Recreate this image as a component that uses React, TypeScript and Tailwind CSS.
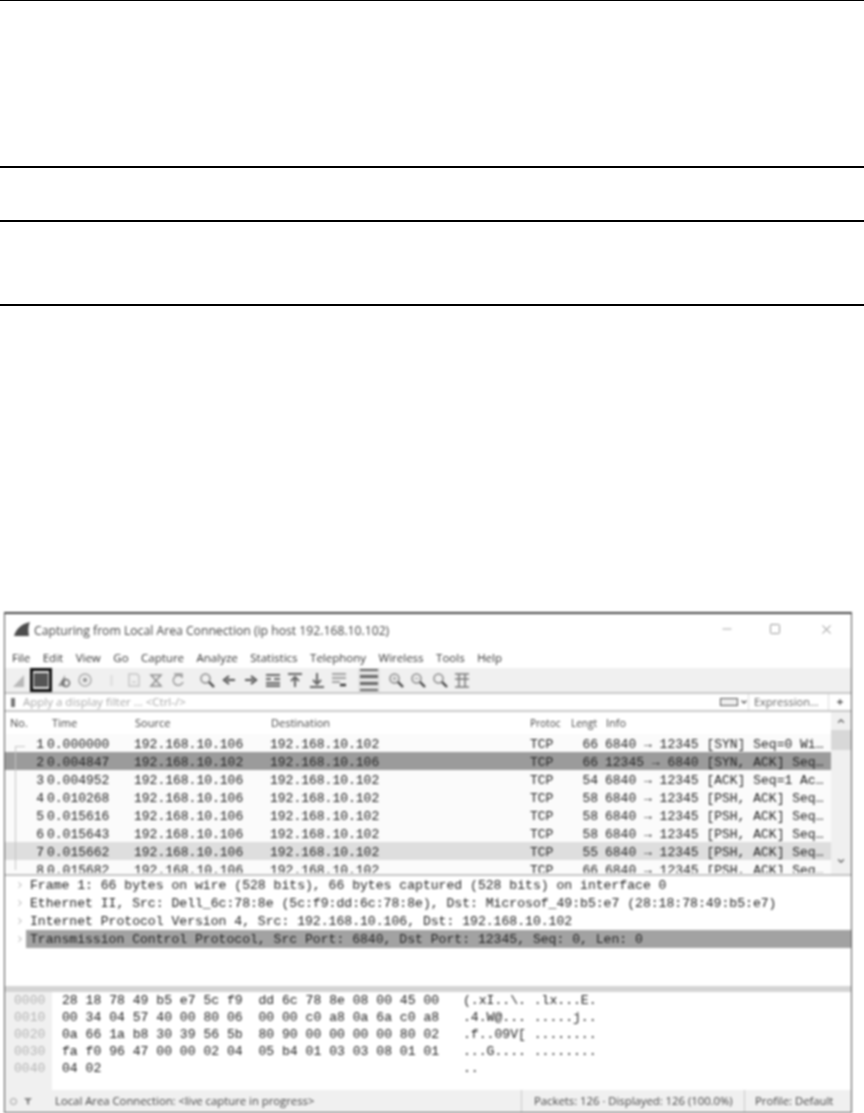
import { ChevronDown, ChevronRight, ChevronUp, Minus, Plus, Square, X } from 'lucide-react';
import type { ReactNode } from 'react';

const mono = "font-['Liberation_Mono',monospace]";
const ui = "font-['Open_Sans',sans-serif]";

const packets = [
  ['1', '0.000000', '192.168.10.106', '192.168.10.102', '66', '6840 → 12345 [SYN] Seq=0 Wi…'],
  ['2', '0.004847', '192.168.10.102', '192.168.10.106', '66', '12345 → 6840 [SYN, ACK] Seq…'],
  ['3', '0.004952', '192.168.10.106', '192.168.10.102', '54', '6840 → 12345 [ACK] Seq=1 Ac…'],
  ['4', '0.010268', '192.168.10.106', '192.168.10.102', '58', '6840 → 12345 [PSH, ACK] Seq…'],
  ['5', '0.015616', '192.168.10.106', '192.168.10.102', '58', '6840 → 12345 [PSH, ACK] Seq…'],
  ['6', '0.015643', '192.168.10.106', '192.168.10.102', '58', '6840 → 12345 [PSH, ACK] Seq…'],
  ['7', '0.015662', '192.168.10.106', '192.168.10.102', '55', '6840 → 12345 [PSH, ACK] Seq…'],
  ['8', '0.015682', '192.168.10.106', '192.168.10.102', '66', '6840 → 12345 [PSH, ACK] Seq…'],
];

const details = [
  'Frame 1: 66 bytes on wire (528 bits), 66 bytes captured (528 bits) on interface 0',
  'Ethernet II, Src: Dell_6c:78:8e (5c:f9:dd:6c:78:8e), Dst: Microsof_49:b5:e7 (28:18:78:49:b5:e7)',
  'Internet Protocol Version 4, Src: 192.168.10.106, Dst: 192.168.10.102',
  'Transmission Control Protocol, Src Port: 6840, Dst Port: 12345, Seq: 0, Len: 0',
];

const hexRows = [
  ['0000', '28 18 78 49 b5 e7 5c f9  dd 6c 78 8e 08 00 45 00', '(.xI..\\. .lx...E.'],
  ['0010', '00 34 04 57 40 00 80 06  00 00 c0 a8 0a 6a c0 a8', '.4.W@... .....j..'],
  ['0020', '0a 66 1a b8 30 39 56 5b  80 90 00 00 00 00 80 02', '.f..09V[ ........'],
  ['0030', 'fa f0 96 47 00 00 02 04  05 b4 01 03 03 08 01 01', '...G.... ........'],
  ['0040', '04 02', '..'],
];

const menus = ['File', 'Edit', 'View', 'Go', 'Capture', 'Analyze', 'Statistics', 'Telephony', 'Wireless', 'Tools', 'Help'];

function Icon({ children, className = '' }: { children: ReactNode; className?: string }) {
  return (
    <div className={`flex h-[20px] w-[22px] shrink-0 items-center justify-center ${className}`}>
      <svg width="18" height="18" viewBox="0 0 18 18" fill="none" stroke="#6b6b6b" strokeWidth="1.5">
        {children}
      </svg>
    </div>
  );
}

function Lens({ inner }: { inner?: ReactNode }) {
  return (
    <>
      <circle cx="7.5" cy="7.5" r="4.5" stroke="#8a8a8a" />
      <path d="M11 11l5 5" stroke="#444" strokeWidth="2.4" />
      {inner}
    </>
  );
}

function Toolbar() {
  return (
    <div className="flex h-[24px] items-center bg-[#f0f0f0] pl-[3px]">
      <Icon>
        <path d="M3 16L14 4v12z" fill="#b8b8b8" stroke="none" />
      </Icon>
      <div className="flex h-[24px] w-[22px] shrink-0 items-center justify-center border-[3px] border-[#111]">
        <div className="h-[14px] w-[14px] bg-[#555]" />
      </div>
      <Icon>
        <path d="M4 15L11 4v11z" fill="#999" stroke="none" />
        <circle cx="12" cy="12" r="3.5" stroke="#666" />
      </Icon>
      <Icon>
        <circle cx="9" cy="9" r="6" stroke="#aaa" />
        <circle cx="9" cy="9" r="2.2" fill="#999" stroke="none" />
      </Icon>
      <div className="w-[5px] shrink-0" />
      <Icon>
        <path d="M7 4h3v11H7z" fill="#e2e2e2" stroke="none" />
      </Icon>
      <Icon>
        <path d="M4 3h8l2 2v10H4z" stroke="#c4c4c4" />
        <path d="M7 11h4" stroke="#ccc" />
      </Icon>
      <Icon>
        <path d="M4 4h10L4 15h10z" stroke="#8d8d8d" />
      </Icon>
      <Icon>
        <path d="M13 6a5 5 0 1 0 1 5M5 3h8v4" stroke="#9a9a9a" />
      </Icon>
      <div className="w-[7px] shrink-0" />
      <Icon>
        <Lens />
      </Icon>
      <Icon>
        <path d="M15 9H7M9 5L4 9l5 4" stroke="#555" strokeWidth="2.2" />
      </Icon>
      <Icon>
        <path d="M3 9h8M9 5l5 4-5 4" stroke="#555" strokeWidth="2.2" />
      </Icon>
      <Icon>
        <path d="M2 4h14M2 8h5M10 8h6M2 12h14M2 15h14" stroke="#666" strokeWidth="1.8" />
      </Icon>
      <Icon>
        <path d="M2 3h14M9 16V7M5 10l4-4 4 4" stroke="#666" strokeWidth="2" />
      </Icon>
      <Icon>
        <path d="M2 16h14M9 2v10M5 9l4 4 4-4" stroke="#666" strokeWidth="2" />
      </Icon>
      <Icon>
        <path d="M2 3h14M2 7h14M2 11h8" stroke="#888" />
        <path d="M10 14h6" stroke="#333" strokeWidth="2.4" />
      </Icon>
      <div className="w-[8px] shrink-0" />
      <div className="flex h-[24px] w-[22px] shrink-0 flex-col justify-center gap-[4px] bg-[#e3e3e3] px-[2px]">
        <div className="h-[2px] bg-[#666]" />
        <div className="h-[3px] bg-[#666]" />
        <div className="h-[3px] bg-[#666]" />
        <div className="h-[2px] bg-[#666]" />
      </div>
      <div className="w-[5px] shrink-0" />
      <Icon>
        <Lens inner={<path d="M5.5 7.5h4M7.5 5.5v4" stroke="#999" strokeWidth="1" />} />
      </Icon>
      <Icon>
        <Lens inner={<path d="M5.5 7.5h4" stroke="#999" strokeWidth="1" />} />
      </Icon>
      <Icon>
        <Lens />
      </Icon>
      <Icon>
        <path d="M2 3h14M2 16h14M6 3v13M12 3v13M2 8h14" stroke="#777" />
      </Icon>
    </div>
  );
}

function FilterRow() {
  return (
    <div className={`flex h-[20px] items-center border-y-2 border-[#c8c8c8] bg-white pl-[4px] text-[11.5px] ${ui}`}>
      <div className="mx-[2px] h-[9px] w-[4px] bg-[#777]" />
      <span className="ml-[6px] text-[#a8a8a8]">Apply a display filter … &lt;Ctrl-/&gt;</span>
      <div className="ml-auto flex items-center">
        <div className="h-[8px] w-[18px] border border-[#555] bg-[#eee]" />
        <ChevronDown size={8} strokeWidth={4} className="ml-[2px] text-[#555]" />
        <div className="h-[16px] border-l border-[#ddd]" />
        <span className="ml-[5px] w-[74px] text-[11px] text-[#666]">Expression…</span>
        <div className="h-[16px] border-l border-[#ddd]" />
        <div className="flex w-[22px] justify-center">
          <Plus size={8} strokeWidth={4} className="text-[#555]" />
        </div>
      </div>
    </div>
  );
}

function PacketList() {
  return (
    <div className="flex h-[164px] border-b-2 border-[#c4c4c4]">
      <div className="min-w-0 flex-1 overflow-hidden">
        <div className={`flex h-[22px] items-center bg-white text-[11px] text-[#444] ${ui}`}>
          <span className="w-[47px] pl-[5px]">No.</span>
          <span className="w-[83px]">Time</span>
          <span className="w-[136px]">Source</span>
          <span className="w-[259px]">Destination</span>
          <span className="w-[41px] text-[10px]">Protoc</span>
          <span className="w-[35px] text-[10px]">Lengt</span>
          <span>Info</span>
        </div>
        <div className={`relative h-[139px] overflow-hidden text-[13px] leading-[18px] text-[#222] ${mono}`}>
          {packets.map((p, i) => (
            <div
              key={p[0]}
              className={`flex h-[18px] pt-[2px] whitespace-pre ${
                i === 1 ? 'bg-[#9b9b9b]' : i === 6 ? 'bg-[#dedede]' : 'bg-[#fbfbfb]'
              }`}
            >
              <span className="w-[39px] text-right">{p[0]}</span>
              <span className="ml-[3px] w-[87px]">{p[1]}</span>
              <span className="w-[136px]">{p[2]}</span>
              <span className="w-[260px]">{p[3]}</span>
              <span className="w-[41px]">TCP</span>
              <span className="w-[27px] text-right">{p[4]}</span>
              <span className="ml-[7px]">{p[5]}</span>
            </div>
          ))}
          <div className="absolute top-[12px] left-[10px] h-[124px] w-[10px] border-t border-l border-[#c4c4c4]" />
        </div>
      </div>
      <div className="flex w-[20px] shrink-0 flex-col items-center bg-[#f0f0f0]">
        <div className="flex h-[18px] items-center">
          <ChevronUp size={10} strokeWidth={3} className="text-[#666]" />
        </div>
        <div className="h-[20px] w-full bg-[#d8d8d8]" />
        <div className="mt-auto flex h-[26px] items-center">
          <ChevronDown size={10} strokeWidth={3} className="text-[#666]" />
        </div>
      </div>
    </div>
  );
}

function Details() {
  return (
    <div className={`h-[116px] border-b-[6px] border-[#d4d4d4] bg-white text-[13.1px] text-[#222] ${mono}`}>
      {details.map((line, i) => (
        <div key={line} className="flex h-[18px] items-center whitespace-pre">
          <ChevronRight size={10} strokeWidth={2} className="ml-[9px] w-[12px] shrink-0 text-[#999]" />
          <span className={`h-[18px] flex-1 pl-[4px] leading-[20px] ${i === 3 ? 'bg-[#a2a2a2]' : ''}`}>{line}</span>
        </div>
      ))}
    </div>
  );
}

function HexDump() {
  return (
    <div className={`flex h-[98px] text-[13.1px] leading-[17px] ${mono}`}>
      <div className="w-[47px] shrink-0 bg-[#f0f0f0] pl-[9px] text-[#b4b4b4]">
        {hexRows.map((r) => (
          <div key={r[0]} className="h-[17px]">
            {r[0]}
          </div>
        ))}
      </div>
      <div className="flex-1 bg-white pl-[10px] whitespace-pre text-[#222]">
        {hexRows.map((r) => (
          <div key={r[0]} className="flex h-[17px]">
            <span className="w-[401px]">{r[1]}</span>
            <span>{r[2]}</span>
          </div>
        ))}
      </div>
    </div>
  );
}

function StatusBar() {
  return (
    <div className={`flex h-[22px] items-center bg-[#f0f0f0] text-[11.3px] text-[#444] ${ui}`}>
      <div className="ml-[5px] h-[7px] w-[7px] rounded-full border border-[#999]" />
      <svg width="10" height="10" viewBox="0 0 10 10" className="ml-[6px]">
        <path d="M1 2h8L6 5v4L4 8V5z" fill="#888" />
      </svg>
      <span className="ml-[22px] w-[466px]">Local Area Connection: &lt;live capture in progress&gt;</span>
      <div className="h-full border-l border-[#c8c8c8]" />
      <span className="ml-[12px] w-[210px]">Packets: 126 · Displayed: 126 (100.0%)</span>
      <div className="h-full border-l border-[#c8c8c8]" />
      <span className="ml-[10px]">Profile: Default</span>
    </div>
  );
}

export default function App() {
  return (
    <div className="h-[1113px] w-[864px] overflow-hidden bg-white">
      <div className="h-[166px] border-t border-black" />
      <div className="h-[54px] border-t-2 border-black" />
      <div className="h-[84px] border-t-2 border-black" />
      <div className="h-[308px] border-t-2 border-black" />

      <div className="ml-[4px] h-[501px] w-[848px] border-x border-t-2 border-b border-[#555] border-t-[#444] bg-white blur-[1px]">
        <div className={`flex h-[34px] items-center text-[#444] ${ui}`}>
          <svg width="18" height="14" viewBox="0 0 18 14" className="mb-[4px] ml-[8px]">
            <path d="M1 14C3 7 8 2 17 0c-2 4-2 9-1 14z" fill="#4d4d4d" />
          </svg>
          <span className="ml-[3px] text-[12.2px]">Capturing from Local Area Connection (ip host 192.168.10.102)</span>
          <div className="mb-[4px] ml-auto flex items-center pr-[17px] text-[#777]">
            <Minus size={14} strokeWidth={1.5} className="text-[#999]" />
            <Square size={12} strokeWidth={1.5} className="ml-[35px]" />
            <X size={15} strokeWidth={1.5} className="ml-[38px]" />
          </div>
        </div>
        <div className={`flex h-[20px] items-center gap-[12.5px] pl-[7px] text-[11.5px] text-[#333] ${ui}`}>
          {menus.map((m) => (
            <span key={m}>{m}</span>
          ))}
        </div>
        <Toolbar />
        <FilterRow />
        <PacketList />
        <Details />
        <HexDump />
        <StatusBar />
      </div>
    </div>
  );
}
